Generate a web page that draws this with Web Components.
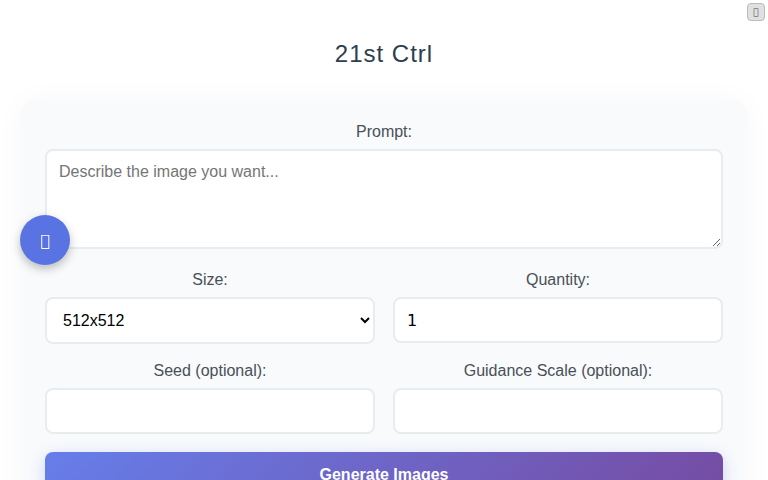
<!DOCTYPE html>
<html lang="en">
<head>
<meta charset="utf-8">
<title>21st Ctrl</title>
<style>
    html { overflow: hidden; }
    body {
        margin: 0;
        background: #fff;
        font-family: "Liberation Sans", Arial, sans-serif;
    }
</style>
</head>
<body>
<theme-toggle></theme-toggle>
<float-button></float-button>
<app-page>
    <app-title>21st Ctrl</app-title>
    <generate-form></generate-form>
</app-page>

<script>
class AppPage extends HTMLElement {
    constructor() {
        super();
        this.attachShadow({mode: 'open'}).innerHTML = `
        <style>
            :host {
                display: block;
                padding: 0 20px;
            }
        </style>
        <slot></slot>`;
    }
}

class AppTitle extends HTMLElement {
    constructor() {
        super();
        this.attachShadow({mode: 'open'}).innerHTML = `
        <style>
            :host {
                display: block;
                padding-top: 39px;
                margin-bottom: 32px;
                text-align: center;
                color: #2c3e50;
                font-size: 24px;
                font-weight: 400;
                line-height: 29px;
                letter-spacing: 1px;
            }
        </style>
        <slot></slot>`;
    }
}

class ThemeToggle extends HTMLElement {
    constructor() {
        super();
        this.attachShadow({mode: 'open'}).innerHTML = `
        <style>
            :host {
                position: fixed;
                top: 3px;
                right: 3px;
                display: flex;
                align-items: center;
                justify-content: center;
                box-sizing: border-box;
                width: 18px;
                height: 18px;
                background: #e0e0e0;
                border: 1px solid #bbb;
                border-radius: 4px;
                color: #444;
                font-family: "DejaVu Sans", sans-serif;
                font-size: 9px;
            }
        </style>
        &#xf186;`;
    }
}

class FloatButton extends HTMLElement {
    constructor() {
        super();
        this.attachShadow({mode: 'open'}).innerHTML = `
        <style>
            :host {
                position: fixed;
                top: 215px;
                left: 20px;
                z-index: 2;
                display: flex;
                align-items: center;
                justify-content: center;
                width: 50px;
                height: 50px;
                border-radius: 50%;
                background: #5a73e3;
                box-shadow: 0 4px 10px rgba(0, 0, 0, 0.25);
                color: #fff;
                font-family: "DejaVu Sans", sans-serif;
                font-size: 16px;
            }
        </style>
        &#xf013;`;
    }
}

class FormField extends HTMLElement {
    constructor() {
        super();
        this.attachShadow({mode: 'open'}).innerHTML = `
        <style>
            :host {
                display: block;
                min-width: 0;
            }
            label {
                display: block;
                margin-bottom: 8px;
                text-align: center;
                color: #495057;
                font-size: 16px;
                line-height: 18px;
            }
        </style>
        <label><slot name="label"></slot></label>
        <slot></slot>`;
    }
}

class GenerateForm extends HTMLElement {
    constructor() {
        super();
        this.attachShadow({mode: 'open'}).innerHTML = `
        <style>
            :host {
                display: block;
                box-sizing: border-box;
                padding: 23px 25px 25px;
                background: #f8fafc;
                border-radius: 15px;
                box-shadow: 0 0 30px rgba(0, 0, 0, 0.03);
            }
            .row {
                display: grid;
                grid-template-columns: 1fr 1fr;
                gap: 18px;
                margin-top: 18px;
            }
            .row.first { margin-top: 22px; }
            textarea, input, select {
                display: block;
                box-sizing: border-box;
                width: 100%;
                padding: 12px;
                border: 2px solid #e9ecef;
                border-radius: 8px;
                background: #fff;
                color: #000;
                font-family: "Liberation Sans", Arial, sans-serif;
                font-size: 16px;
                outline: none;
            }
            input { font-family: "DejaVu Sans", sans-serif; height: 46px; }
            select { height: 47px; }
            textarea { height: 100px; }
            textarea::placeholder { color: #757575; }
            button {
                display: block;
                width: 100%;
                margin-top: 18px;
                padding: 14px;
                border: 0;
                border-radius: 8px;
                background: linear-gradient(135deg, #667eea 0%, #764ba2 100%);
                box-shadow: 0 4px 15px rgba(102, 126, 234, 0.3);
                color: #fff;
                font-family: "Liberation Sans", Arial, sans-serif;
                font-size: 16px;
                font-weight: 700;
            }
        </style>
        <form-field>
            <span slot="label">Prompt:</span>
            <textarea placeholder="Describe the image you want..."></textarea>
        </form-field>
        <div class="row first">
            <form-field>
                <span slot="label">Size:</span>
                <select><option>512x512</option><option>768x768</option><option>1024x1024</option></select>
            </form-field>
            <form-field>
                <span slot="label">Quantity:</span>
                <input type="number" value="1">
            </form-field>
        </div>
        <div class="row">
            <form-field>
                <span slot="label">Seed (optional):</span>
                <input type="number">
            </form-field>
            <form-field>
                <span slot="label">Guidance Scale (optional):</span>
                <input type="number">
            </form-field>
        </div>
        <button type="button">Generate Images</button>`;
    }
}

customElements.define('app-page', AppPage);
customElements.define('app-title', AppTitle);
customElements.define('theme-toggle', ThemeToggle);
customElements.define('float-button', FloatButton);
customElements.define('form-field', FormField);
customElements.define('generate-form', GenerateForm);
</script>
</body>
</html>
